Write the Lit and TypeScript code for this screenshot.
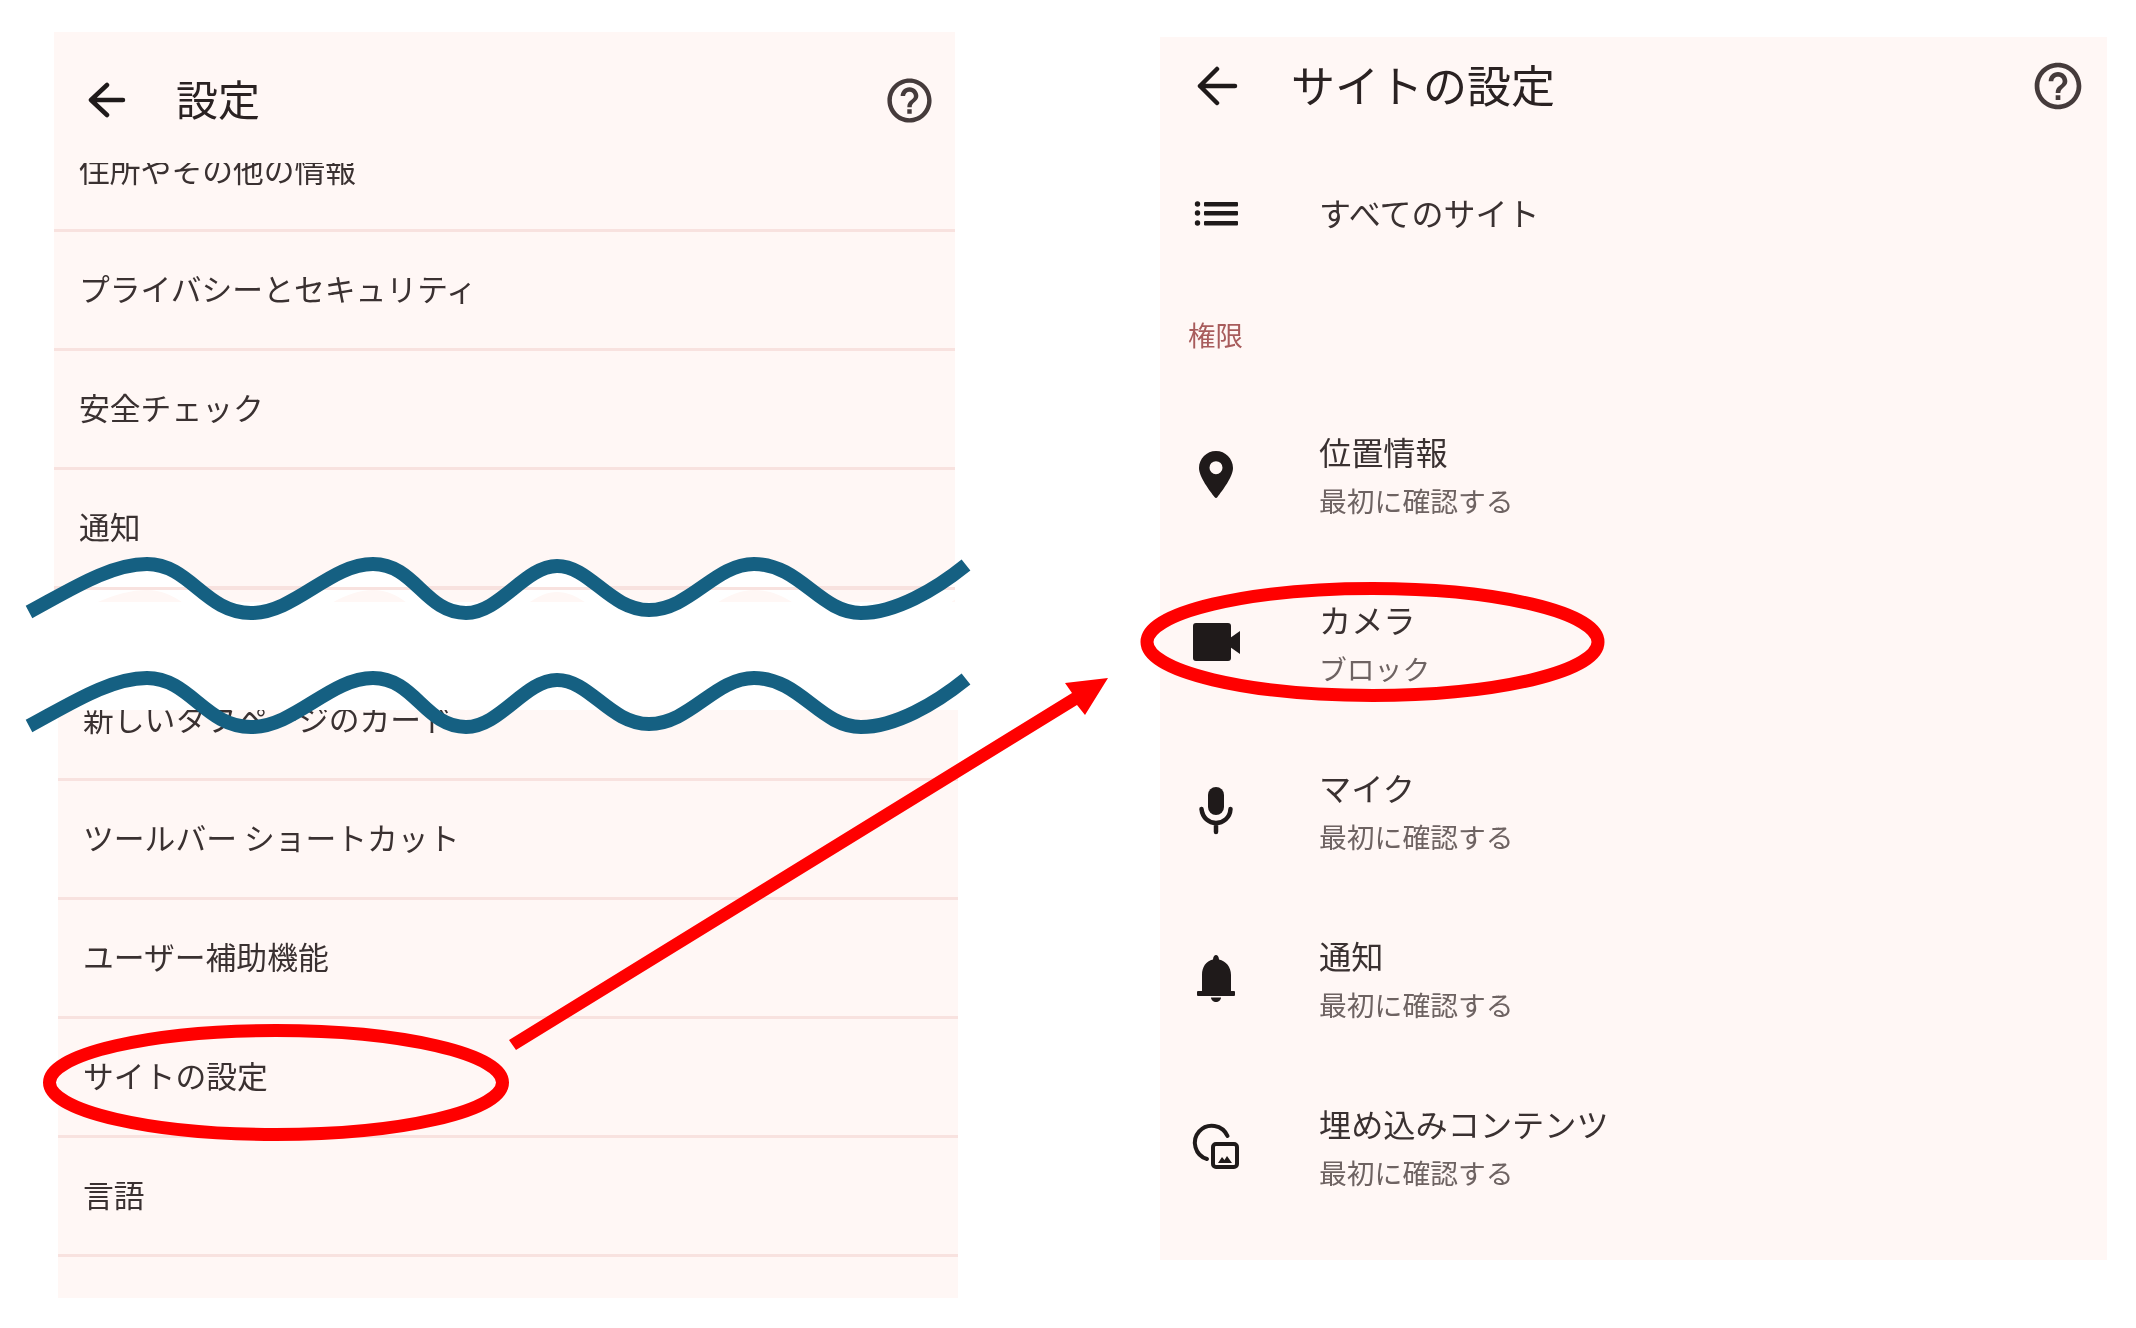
import { LitElement, html, css, svg } from "lit";
import { customElement } from "lit/decorators.js";

const WAVE =
  "M29 612 C70 590 110 564 147 564 C190 564 205 613 251 613 C295 613 330 564 373 564 C415 564 425 613 466 613 C500 613 525 566 557 566 C590 566 610 610 649 610 C690 610 715 564 754 564 C800 564 820 613 861 613 C895 613 935 590 966 565";

const HELP =
  "M11 18h2v-2h-2v2zm1-16C6.48 2 2 6.48 2 12s4.48 10 10 10 10-4.48 10-10S17.52 2 12 2zm0 18c-4.41 0-8-3.59-8-8s3.59-8 8-8 8 3.59 8 8-3.59 8-8 8zm0-14c-2.21 0-4 1.79-4 4h2c0-1.1.9-2 2-2s2 .9 2 2c0 2-3 1.75-3 5h2c0-2.25 3-2.5 3-5 0-2.21-1.79-4-4-4z";

const icon = (body: unknown) =>
  html`<svg class="ic" viewBox="0 0 60 60" width="60" height="60">${body}</svg>`;

const backSmall = icon(svg`<path d="M48 30H16M32 15L16 30L32 45" fill="none" stroke="#1f1a1a" stroke-width="4.5" stroke-linecap="round" stroke-linejoin="round"/>`);
const backLarge = icon(svg`<path d="M49 30H14M31 13L14 30L31 47" fill="none" stroke="#1f1a1a" stroke-width="4.5" stroke-linecap="round" stroke-linejoin="round"/>`);

const listIcon = icon(svg`
  <g fill="#1f1a1a">
    <circle cx="11.5" cy="20" r="2.7"/><circle cx="11.5" cy="29" r="2.7"/><circle cx="11.5" cy="39" r="2.7"/>
    <rect x="18" y="18" width="34" height="4.4" rx="1"/><rect x="18" y="27" width="34" height="4.4" rx="1"/><rect x="18" y="37" width="34" height="4.4" rx="1"/>
  </g>`);

const pin = icon(svg`<path fill="#1f1a1a" fill-rule="evenodd" d="M30 7C20.6 7 13 14.6 13 24C13 33 24 47 28.5 53Q30 55 31.5 53C36 47 47 33 47 24C47 14.6 39.4 7 30 7ZM30 17.2A6.5 6.5 0 1 1 30 30.2A6.5 6.5 0 1 1 30 17.2Z"/>`);
const camera = icon(svg`<g fill="#1f1a1a"><rect x="7" y="11" width="38" height="38" rx="3"/><path d="M44 26L54 19V42L44 35Z"/></g>`);
const mic = icon(svg`
  <rect x="22" y="7" width="16" height="28" rx="8" fill="#1f1a1a"/>
  <path d="M15.5 29C16.5 38 23 43 30 43C37 43 44 38 44.5 29M30 43V52" fill="none" stroke="#1f1a1a" stroke-width="4.5" stroke-linecap="round"/>`);
const bell = icon(svg`<g fill="#1f1a1a">
  <path d="M16 44V27C16 19 20 13 27 11.5C27 9 28.5 7 30 7C31.5 7 33 9 33 11.5C40 13 45 19 45 27V44Z"/>
  <rect x="11" y="43" width="38" height="5" rx="1"/>
  <path d="M25 49.5H35C35 52 32.5 54 30 54C27.5 54 25 52 25 49.5Z"/></g>`);
const embed = icon(svg`
  <path d="M41.5 20A17 17 0 1 0 21 43" fill="none" stroke="#1f1a1a" stroke-width="4" stroke-linecap="round"/>
  <rect x="27" y="28" width="24" height="23" rx="3" fill="#fff7f5" stroke="#1f1a1a" stroke-width="4"/>
  <path d="M32 47L36 41L38.5 44L41 40L46 47Z" fill="#1f1a1a"/>`);

const help = (cls: string) =>
  html`<svg class=${cls} viewBox="0 0 24 24"><path d=${HELP} fill="#453b3b"/></svg>`;

const TOP_ROWS = ["住所やその他の情報", "プライバシーとセキュリティ", "安全チェック", "通知", ""];
const BOTTOM_ROWS = ["新しいタブページのカード", "ツールバー ショートカット", "ユーザー補助機能", "サイトの設定", "言語"];
const PERMS = [
  { icon: pin, title: "位置情報", sub: "最初に確認する" },
  { icon: camera, title: "カメラ", sub: "ブロック" },
  { icon: mic, title: "マイク", sub: "最初に確認する" },
  { icon: bell, title: "通知", sub: "最初に確認する" },
  { icon: embed, title: "埋め込みコンテンツ", sub: "最初に確認する" },
];

@customElement("app-root")
export class AppRoot extends LitElement {
  static styles = css`
    :host {
      display: block;
      width: 2136px;
      height: 1328px;
      position: relative;
      background: #fff;
      overflow: hidden;
      font-family: "Noto Sans CJK JP", "Noto Sans", sans-serif;
      color: #2e2626;
    }
    .page { display: flex; padding-left: 54px; height: 100%; box-sizing: border-box; }
    .left { width: 904px; display: flex; flex-direction: column; gap: 108px; padding-top: 32px; }
    .panel { background: #fff7f5; display: flex; flex-direction: column; overflow: hidden; box-sizing: border-box; }
    .p1 { width: 901px; height: 570px; }
    .p2 { width: 900px; height: 588px; margin-left: 4px; }
    .p3 { width: 947px; height: 1223px; margin: 37px 0 0 202px; }

    .head, .rows, .all, .section, .perm { filter: blur(0.5px); }

    .head { display: flex; align-items: center; flex: none; box-sizing: border-box; }
    .head.small { height: 131px; padding: 5px 16px 0 21px; }
    .head.large { height: 98px; padding: 0 19px 0 26px; }
    .ic { display: block; flex: none; }
    .title { flex: 1; line-height: 1.2; color: #2a2222; }
    .small .title { font-size: 42px; margin: 0 0 4px 41px; }
    .large .title { font-size: 44px; margin: 0 0 3px 45px; }
    .help-s { width: 53px; height: 53px; margin: 0 3px; flex: none; }
    .help-l { width: 56px; height: 56px; margin: 0 2px; flex: none; }

    .rows { display: flex; flex-direction: column; min-height: 0; overflow: hidden; }
    .row {
      flex: none;
      height: 119.1px;
      box-sizing: border-box;
      border-bottom: 3px solid #f8e2df;
      padding-bottom: 6px;
      display: flex;
      align-items: center;
      font-size: 30.8px;
      color: #3a3131;
      white-space: nowrap;
    }
    .p1 .row:first-child { margin-top: -50px; }
    .p2 .row:first-child { margin-top: -48px; }
    .p1 .row { padding-left: 25px; }
    .p2 .row { padding-left: 25px; }

    .all { height: 158px; flex: none; display: flex; align-items: center; padding-left: 26px; }
    .all span { margin: 0 0 5px 73px; font-size: 32px; color: #3a3131; }
    .section { flex: none; padding: 27px 0 45px 28px; font-size: 27.5px; line-height: 28px; color: #a85c5c; }
    .perm { height: 168px; flex: none; display: flex; align-items: center; padding-left: 26px; }
    .perm .ic { margin-bottom: 6px; }
    .perm .text { margin: 0 0 3px 73px; display: flex; flex-direction: column; gap: 9px; }
    .perm .t { font-size: 32.2px; line-height: 40px; color: #3a3131; }
    .perm .s { font-size: 27.8px; line-height: 40px; color: #6e6362; }

    .overlay { position: absolute; left: 0; top: 0; pointer-events: none; }
  `;

  render() {
    return html`
      <div class="page">
        <div class="left">
          <section class="panel p1">
            <div class="head small">${backSmall}<div class="title">設定</div>${help("help-s")}</div>
            <div class="rows">${TOP_ROWS.map((r) => html`<div class="row">${r}</div>`)}</div>
          </section>
          <section class="panel p2">
            <div class="rows">${BOTTOM_ROWS.map((r) => html`<div class="row">${r}</div>`)}</div>
          </section>
        </div>
        <section class="panel p3">
          <div class="head large">${backLarge}<div class="title">サイトの設定</div>${help("help-l")}</div>
          <div class="all">${listIcon}<span>すべてのサイト</span></div>
          <div class="section">権限</div>
          ${PERMS.map(
            (p) => html`<div class="perm">
              ${p.icon}
              <div class="text"><div class="t">${p.title}</div><div class="s">${p.sub}</div></div>
            </div>`
          )}
        </section>
      </div>
      <svg class="overlay" width="2136" height="1328" viewBox="0 0 2136 1328">
        <defs>
          <clipPath id="tail"><rect x="54" y="560" width="901" height="42"></rect></clipPath>
        </defs>
        <path d="${WAVE} V640 H29 Z" fill="#fff"></path>
        <rect x="54" y="587" width="901" height="3" fill="#f8e2df"></rect>
        <g clip-path="url(#tail)">
          <path d="${WAVE} V640 H29 Z" fill="#fff7f5" transform="translate(0 26)"></path>
        </g>
        <path d=${WAVE} fill="none" stroke="#156082" stroke-width="14"></path>
        <path d=${WAVE} fill="none" stroke="#156082" stroke-width="14" transform="translate(0 114)"></path>
        <ellipse cx="276" cy="1082.5" rx="226.5" ry="52" fill="none" stroke="#ff0000" stroke-width="13"></ellipse>
        <ellipse cx="1372.5" cy="642" rx="225.5" ry="53.5" fill="none" stroke="#ff0000" stroke-width="13"></ellipse>
        <path d="M509 1040L1072 693L1065 683L1108 678L1085 715L1077 705L516 1050Z" fill="#ff0000"></path>
      </svg>
    `;
  }
}
